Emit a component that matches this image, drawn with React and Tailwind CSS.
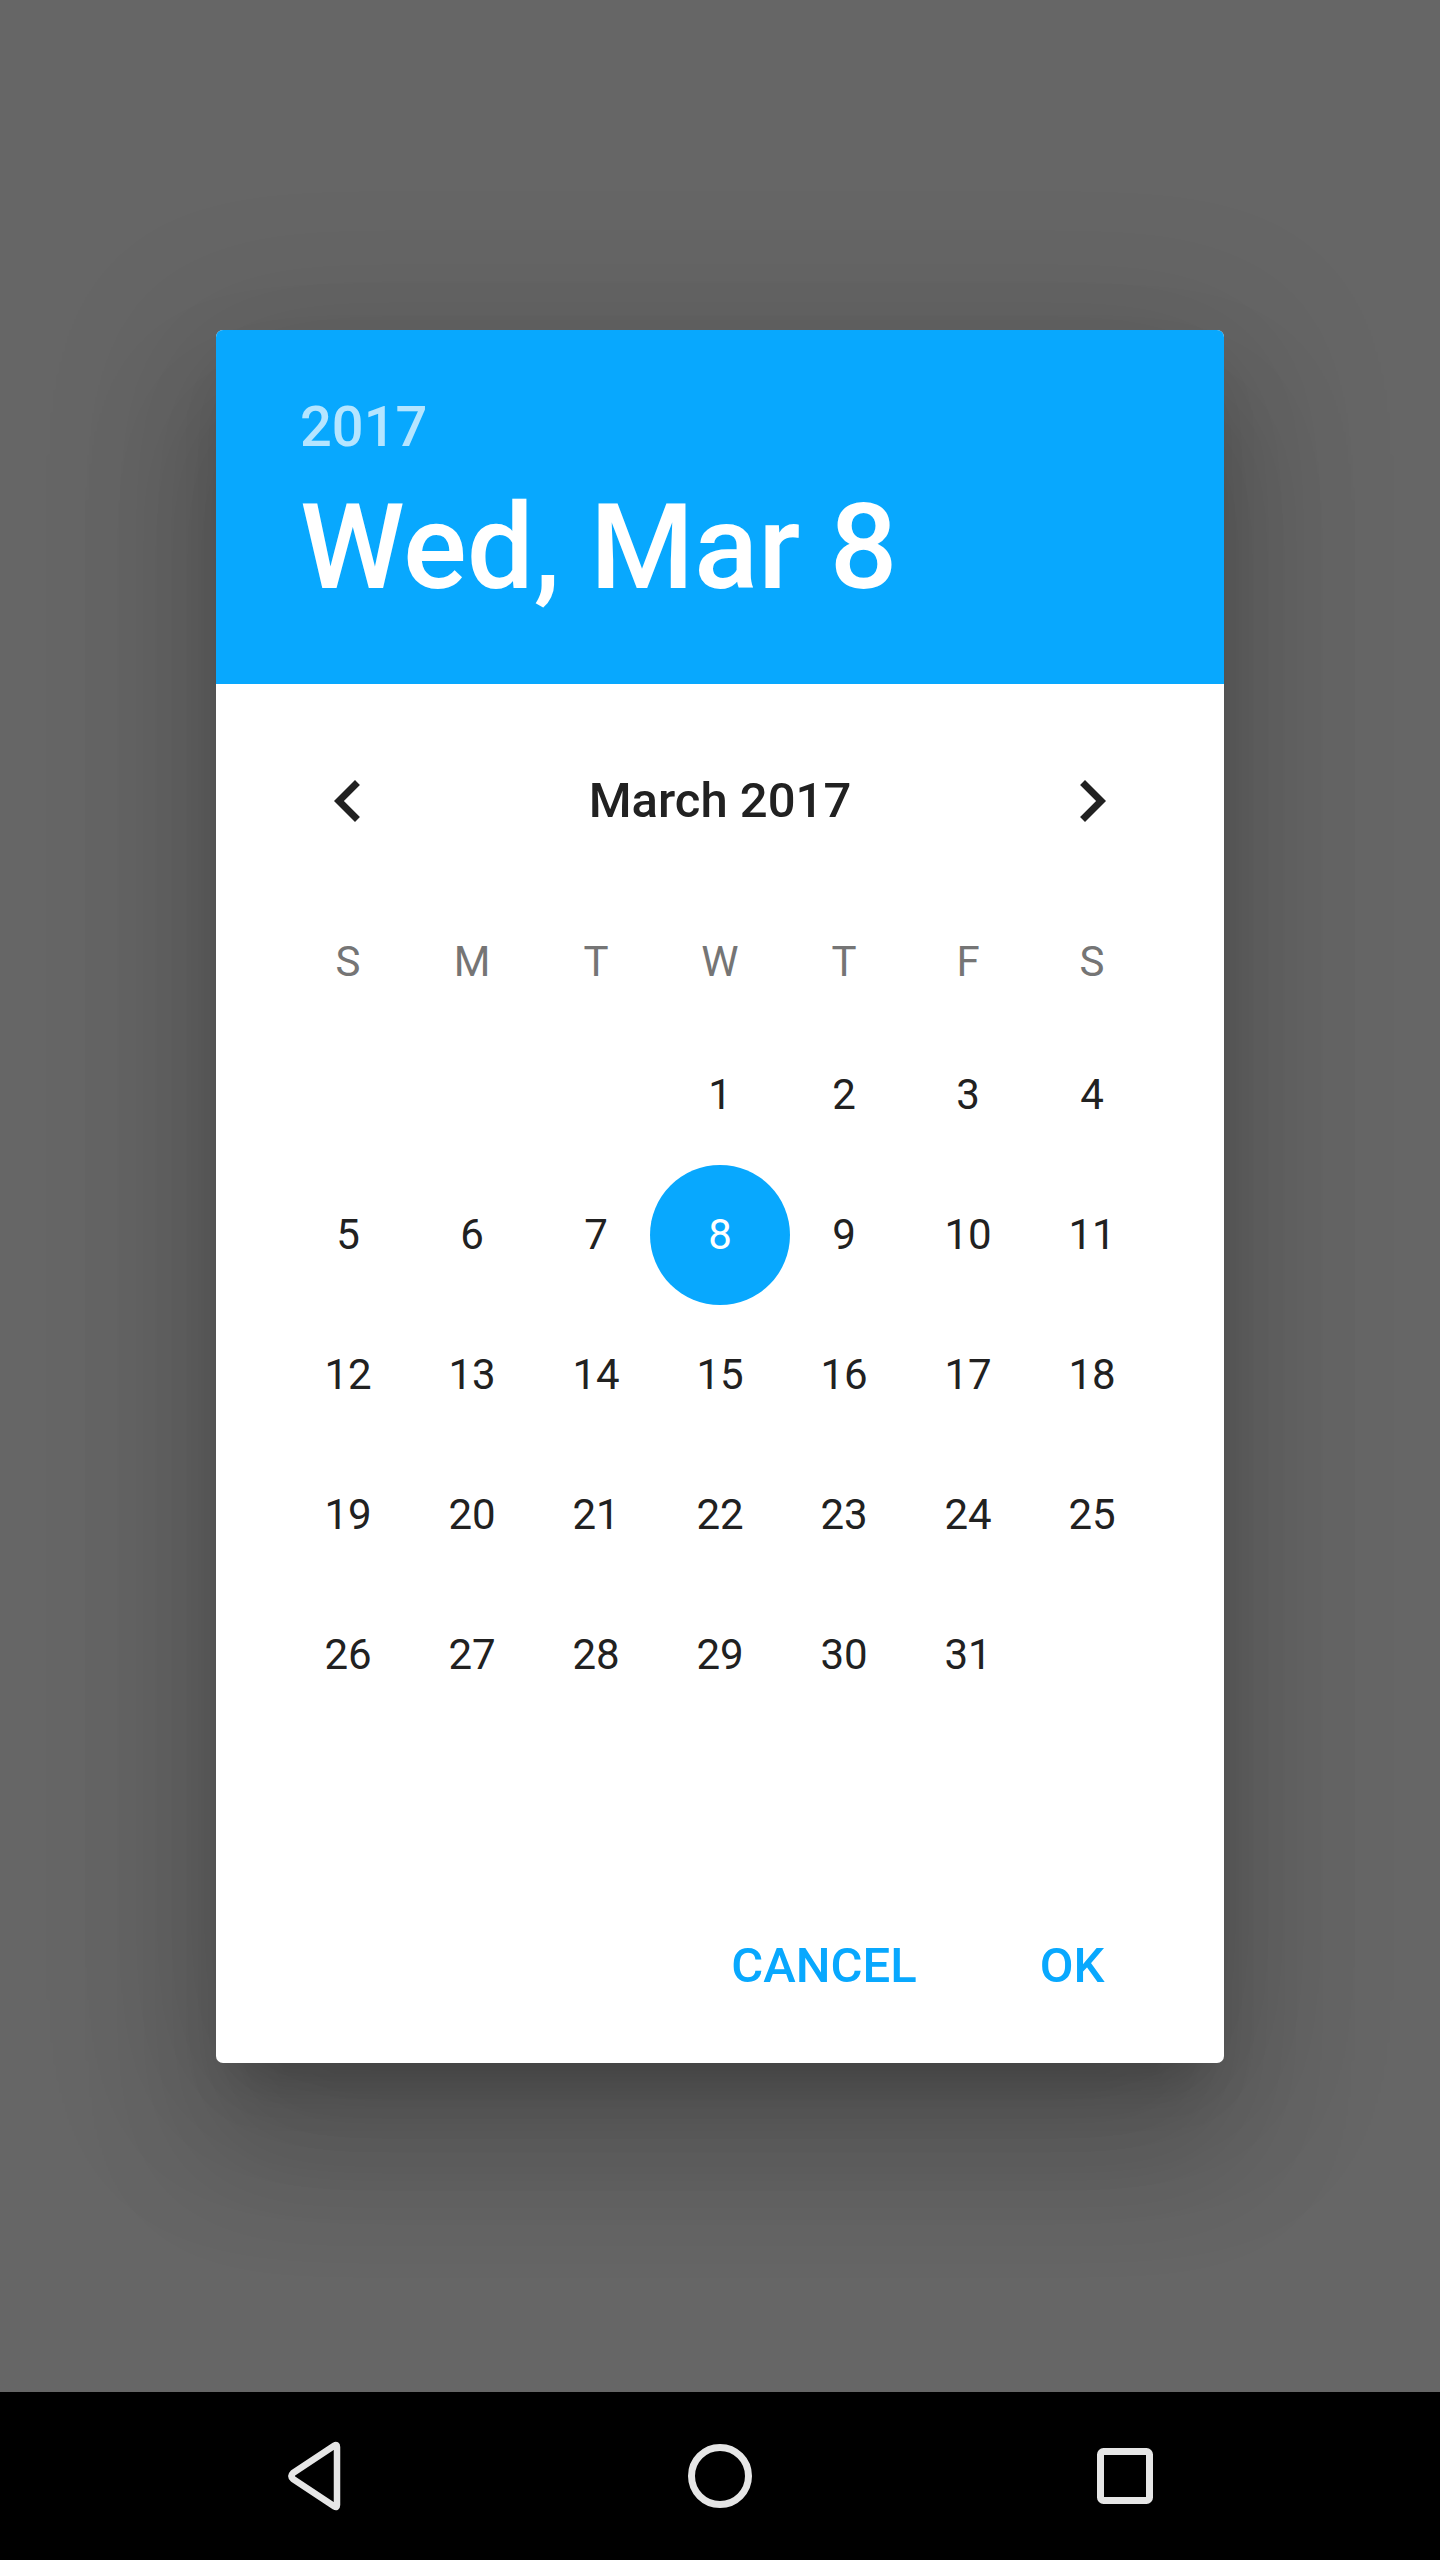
import React from 'react';

const weekdays = ['S', 'M', 'T', 'W', 'T', 'F', 'S'];

// March 2017 starts on a Wednesday
const cells = [
  ...Array(3).fill(null),
  ...Array.from({ length: 31 }, (_, i) => i + 1),
];
const weeks = [];
for (let i = 0; i < 42; i += 7) {
  weeks.push(Array.from({ length: 7 }, (_, j) => cells[i + j] ?? null));
}

const ChevronLeft = () => (
  <svg width="84" height="84" viewBox="0 0 24 24" fill="#212121">
    <path d="M15.41 7.41L14 6l-6 6 6 6 1.41-1.41L10.83 12z" />
  </svg>
);

const ChevronRight = () => (
  <svg width="84" height="84" viewBox="0 0 24 24" fill="#212121">
    <path d="M8.59 16.59L10 18l6-6-6-6-1.41 1.41L13.17 12z" />
  </svg>
);

const NavBar = () => (
  <div className="h-[168px] bg-black flex items-center justify-center">
    <div className="w-[405px] flex items-center justify-center">
      <svg width="60" height="70" viewBox="0 0 60 70" fill="none">
        <path
          d="M52 6 L52 64 Q52 67 49.5 65.5 L8 38 Q5 35 8 32 L49.5 4.5 Q52 3 52 6 Z"
          stroke="#e6e6e6"
          strokeWidth="6.5"
          strokeLinejoin="round"
        />
      </svg>
    </div>
    <div className="w-[405px] flex items-center justify-center">
      <svg width="70" height="70" viewBox="0 0 70 70" fill="none">
        <circle cx="35" cy="35" r="28.5" stroke="#e6e6e6" strokeWidth="7" />
      </svg>
    </div>
    <div className="w-[405px] flex items-center justify-center">
      <svg width="62" height="62" viewBox="0 0 62 62" fill="none">
        <rect x="6.5" y="6.5" width="49" height="49" rx="3" stroke="#e6e6e6" strokeWidth="7" />
      </svg>
    </div>
  </div>
);

export default function App() {
  return (
    <div
      className="w-[1440px] h-[2560px] flex flex-col bg-[#666666]"
      style={{ fontFamily: 'Roboto, "Noto Sans", sans-serif' }}
    >
      <div className="flex-1 flex items-center justify-center">
        <div className="w-[1008px] rounded-[7px] overflow-hidden bg-white shadow-[0_84px_133px_10px_rgba(0,0,0,0.14),0_31px_161px_28px_rgba(0,0,0,0.12),0_38px_52px_-24px_rgba(0,0,0,0.2)]">
          {/* header */}
          <div className="h-[354px] bg-[#08a8fe] pl-[84px] pt-[69px]">
            <div className="text-[56px] leading-none font-medium text-white/70">2017</div>
            <div className="mt-[33px] text-[119px] leading-none font-medium text-white">
              Wed, Mar 8
            </div>
          </div>

          {/* body */}
          <div className="h-[1379px] flex flex-col px-[70px]">
            <div className="mt-[47px] h-[140px] flex items-center">
              <div className="w-[124px] flex justify-center">
                <ChevronLeft />
              </div>
              <div className="flex-1 text-center text-[49px] font-medium text-[#212121]">
                March 2017
              </div>
              <div className="w-[124px] flex justify-center">
                <ChevronRight />
              </div>
            </div>

            <div className="mt-[28px] h-[126px] grid grid-cols-7 items-center">
              {weekdays.map((d, i) => (
                <div key={i} className="text-center text-[42px] text-[#757575]">
                  {d}
                </div>
              ))}
            </div>

            {weeks.map((week, wi) => (
              <div key={wi} className="h-[140px] grid grid-cols-7">
                {week.map((day, di) => (
                  <div key={di} className="flex items-center justify-center">
                    {day === 8 ? (
                      <div className="w-[140px] h-[140px] shrink-0 rounded-full bg-[#08a8fe] flex items-center justify-center text-[42px] text-white">
                        8
                      </div>
                    ) : (
                      <span className="text-[42px] text-[#212121]">{day ?? ''}</span>
                    )}
                  </div>
                ))}
              </div>
            ))}

            <div className="mt-auto mb-[34px] h-[126px] flex justify-end -mr-[70px] pr-[52px]">
              <button className="w-[296px] text-[49px] font-medium text-[#08a8fe]">CANCEL</button>
              <button className="w-[200px] text-[49px] font-medium text-[#08a8fe]">OK</button>
            </div>
          </div>
        </div>
      </div>
      <NavBar />
    </div>
  );
}
